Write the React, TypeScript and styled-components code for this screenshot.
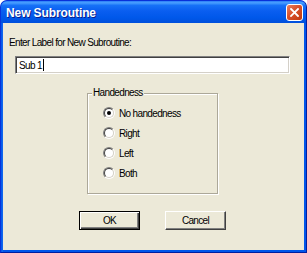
import React from "react";
import styled, { createGlobalStyle } from "styled-components";

const Global = createGlobalStyle`
  html, body { margin: 0; padding: 0; background: #ffffff; }
  body { width: 307px; height: 253px; overflow: hidden; }
`;

const uiFont = `"Liberation Sans", Arial, sans-serif`;

const Window = styled.div`
  box-sizing: border-box;
  width: 307px;
  height: 253px;
  display: flex;
  flex-direction: column;
  border: 1px solid;
  border-color: #0831d9 #001ea0 #001ea0 #0831d9;
  border-radius: 7px 7px 0 0;
  background: #0055ea;
  overflow: hidden;
`;

const TitleBar = styled.div`
  height: 22px;
  flex: none;
  display: flex;
  align-items: center;
  justify-content: space-between;
  padding: 0 3px 0 5px;
  background: linear-gradient(
    to bottom,
    #2a7cf8 0%,
    #4aa0ff 8%,
    #1671f7 20%,
    #0a5ef0 45%,
    #0058ea 75%,
    #0050dc 100%
  );
`;

const Title = styled.span`
  font-family: "Liberation Sans", Arial, sans-serif;
  font-weight: bold;
  font-size: 12px;
  letter-spacing: -0.1px;
  color: #ffffff;
  text-shadow: 1px 1px 0 #0a1e8c;
  padding-top: 1px;
`;

const CloseButton = styled.div`
  box-sizing: border-box;
  width: 17px;
  height: 17px;
  border: 1px solid #ffffff;
  border-radius: 3px;
  background: linear-gradient(135deg, #e98060 0%, #d8502a 45%, #c1380f 100%);
  display: flex;
  align-items: center;
  justify-content: center;
`;

const Frame = styled.div`
  flex: 1;
  display: flex;
  padding: 0 2px 2px 2px;
  background: linear-gradient(to right, #0055ea 0, #166aee 2px, #0055ea 2px);
`;

const Body = styled.div`
  flex: 1;
  background: #ece9d8;
  display: flex;
  flex-direction: column;
  padding: 13px 0 0 6px;
  font-family: ${uiFont};
  font-size: 10px;
  letter-spacing: -0.65px;
  color: #000000;
`;

const Prompt = styled.div`
  line-height: 13px;
  height: 13px;
`;

const TextBox = styled.div`
  box-sizing: border-box;
  margin: 7px 0 0 6px;
  width: 275px;
  height: 18px;
  background: #ffffff;
  border: 1px solid;
  border-color: #808080 #ffffff #ffffff #808080;
  box-shadow: inset 1px 1px #404040, inset -1px -1px #d4d0c8;
  padding: 0 3px;
  display: flex;
  align-items: center;
  line-height: 13px;
`;

const Caret = styled.span`
  display: inline-block;
  width: 1px;
  height: 12px;
  background: #000000;
  margin-left: 1px;
`;

const Group = styled.div`
  position: relative;
  box-sizing: border-box;
  margin: 19px 0 0 78px;
  width: 131px;
  height: 101px;
  border: 1px solid #aca899;
  box-shadow: inset 1px 1px #ffffff, 1px 1px #ffffff;
  padding: 9px 0 0 15px;
  display: flex;
  flex-direction: column;
`;

const GroupTitle = styled.span`
  position: absolute;
  top: -7px;
  left: 4px;
  padding: 0 1px;
  background: #ece9d8;
  line-height: 12px;
`;

const RadioRow = styled.div`
  height: 20px;
  display: flex;
  align-items: center;
  gap: 4px;
  line-height: 13px;
`;

const RadioOuter = styled.span`
  box-sizing: border-box;
  width: 12px;
  height: 12px;
  border-radius: 50%;
  border: 1px solid;
  border-color: #808080 #ffffff #ffffff #808080;
  display: flex;
`;

const RadioInner = styled.span<{ $checked?: boolean }>`
  box-sizing: border-box;
  flex: 1;
  border-radius: 50%;
  border: 1px solid;
  border-color: #404040 #d4d0c8 #d4d0c8 #404040;
  background: #ffffff;
  display: flex;
  align-items: center;
  justify-content: center;
  &::after {
    content: "";
    width: 4px;
    height: 4px;
    border-radius: 50%;
    background: ${(p) => (p.$checked ? "#000000" : "transparent")};
  }
`;

const ButtonRow = styled.div`
  display: flex;
  gap: 25px;
  margin: 17px 0 0 70px;
`;

const Button = styled.div<{ $default?: boolean }>`
  box-sizing: border-box;
  width: 61px;
  height: 19px;
  background: #ece9d8;
  display: flex;
  align-items: center;
  justify-content: center;
  line-height: 13px;
  border: 1px solid;
  border-color: ${(p) => (p.$default ? "#000000" : "#ffffff #404040 #404040 #ffffff")};
  box-shadow: ${(p) =>
    p.$default
      ? "inset 1px 1px #ffffff, inset -1px -1px #404040, inset -2px -2px #808080"
      : "inset -1px -1px #808080"};
`;

const options = ["No handedness", "Right", "Left", "Both"];

export default function App() {
  return (
    <>
      <Global />
      <Window>
        <TitleBar>
          <Title>New Subroutine</Title>
          <CloseButton>
            <svg width="9" height="9" viewBox="0 0 9 9">
              <path d="M1 1 L8 8 M8 1 L1 8" stroke="#ffffff" strokeWidth="1.8" strokeLinecap="square" />
            </svg>
          </CloseButton>
        </TitleBar>
        <Frame>
          <Body>
            <Prompt>Enter Label for New Subroutine:</Prompt>
            <TextBox>
              <span>Sub 1</span>
              <Caret />
            </TextBox>
            <Group>
              <GroupTitle>Handedness</GroupTitle>
              {options.map((o, i) => (
                <RadioRow key={o}>
                  <RadioOuter>
                    <RadioInner $checked={i === 0} />
                  </RadioOuter>
                  <span>{o}</span>
                </RadioRow>
              ))}
            </Group>
            <ButtonRow>
              <Button $default>OK</Button>
              <Button>Cancel</Button>
            </ButtonRow>
          </Body>
        </Frame>
      </Window>
    </>
  );
}
